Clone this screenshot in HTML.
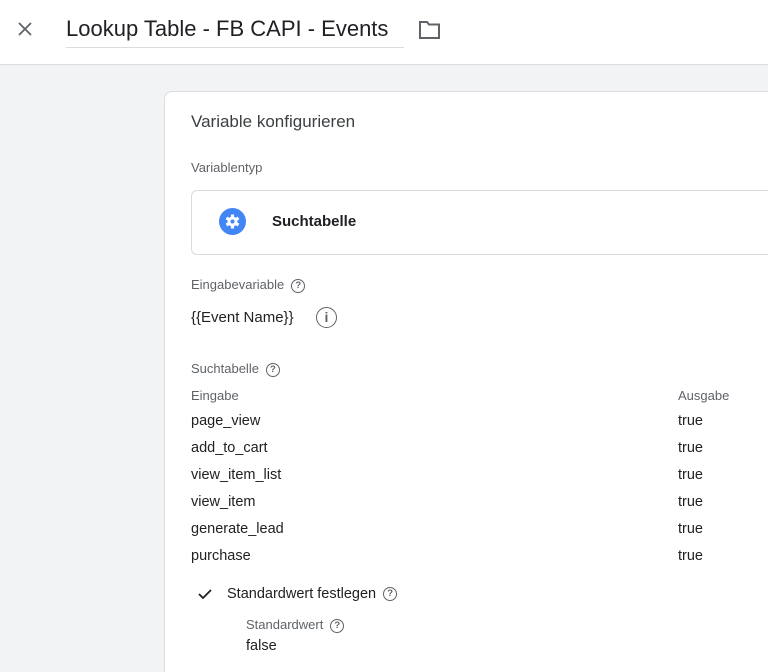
<html><head><style>
html,body{margin:0;width:768px;height:672px;overflow:hidden}
body{background:#f1f3f4;font-family:"Liberation Sans",Arial,sans-serif;position:relative}
.hdr{position:absolute;left:0;top:0;width:768px;height:64px;background:#fff;border-bottom:1px solid #dadce0}
.t{position:absolute;font-size:14.5px;color:#202124;white-space:nowrap}
.s{color:#5f6368;font-size:13px}
.card{position:absolute;left:164px;top:91px;width:603px;height:581px;background:#fff;border:1px solid #dadce0;border-right:none;border-bottom:none;border-radius:8px 0 0 0}
.q{display:inline-block;width:12px;height:12px;border:1.6px solid #5f6368;border-radius:50%;font-size:9.5px;line-height:12px;text-align:center;color:#5f6368;font-weight:bold;vertical-align:middle;margin-left:7px}
</style></head><body>
<div class="hdr">
<svg style="position:absolute;left:17px;top:21px" width="16" height="16"><path d="M2 2L14 14M14 2L2 14" stroke="#5f6368" stroke-width="1.8"/></svg>
<div class="t" style="left:66px;top:16px;font-size:22px;color:#202124">Lookup Table - FB CAPI - Events</div>
<div style="position:absolute;left:66px;top:47px;width:338px;height:1px;background:#dadce0"></div>
<svg style="position:absolute;left:418px;top:19px" width="24" height="22"><path d="M2 3H9L11 5.5H21V19H2Z" fill="none" stroke="#5f6368" stroke-width="2"/></svg>
</div>
<div class="card"></div>
<div class="t" style="left:191px;top:112px;font-size:17px;color:#3c4043">Variable konfigurieren</div>
<div class="t s" style="left:191px;top:160px">Variablentyp</div>
<div style="position:absolute;left:191px;top:190px;width:576px;height:63px;border:1px solid #dadce0;border-right:none;border-radius:6px 0 0 6px;background:#fff"></div>
<svg style="position:absolute;left:219px;top:208px" width="27" height="27" viewBox="0 0 27 27"><circle cx="13.5" cy="13.5" r="13.5" fill="#4285f4"/><g transform="translate(13.5 13.5)" fill="#fff"><circle r="5"/><g><rect x="-1.6" y="-7" width="3.2" height="14"/><rect x="-1.6" y="-7" width="3.2" height="14" transform="rotate(60)"/><rect x="-1.6" y="-7" width="3.2" height="14" transform="rotate(120)"/></g></g><circle cx="13.5" cy="13.5" r="2" fill="#4285f4"/></svg>
<div class="t" style="left:272px;top:213px;font-weight:bold;font-size:15px">Suchtabelle</div>
<div class="t s" style="left:191px;top:277px">Eingabevariable<span class="q">?</span></div>
<div class="t" style="left:191px;top:309px;font-size:15px">{{Event Name}}</div>
<div style="position:absolute;left:316px;top:307px;width:19px;height:19px;border:1.8px solid #5f6368;border-radius:50%;color:#5f6368;font-size:14px;line-height:19px;text-align:center;font-weight:bold">i</div>
<div class="t s" style="left:191px;top:361px">Suchtabelle<span class="q">?</span></div>
<div class="t s" style="left:191px;top:388px">Eingabe</div>
<div class="t s" style="left:678px;top:388px">Ausgabe</div>
<div class="t" style="left:191px;top:413px">page_view</div><div class="t" style="left:678px;top:413px">true</div>
<div class="t" style="left:191px;top:440px">add_to_cart</div><div class="t" style="left:678px;top:440px">true</div>
<div class="t" style="left:191px;top:467px">view_item_list</div><div class="t" style="left:678px;top:467px">true</div>
<div class="t" style="left:191px;top:494px">view_item</div><div class="t" style="left:678px;top:494px">true</div>
<div class="t" style="left:191px;top:521px">generate_lead</div><div class="t" style="left:678px;top:521px">true</div>
<div class="t" style="left:191px;top:548px">purchase</div><div class="t" style="left:678px;top:548px">true</div>
<svg style="position:absolute;left:197px;top:587px" width="16" height="14"><path d="M2 7L6 11L14 3" stroke="#202124" stroke-width="1.8" fill="none"/></svg>
<div class="t" style="left:227px;top:586px">Standardwert festlegen<span class="q">?</span></div>
<div class="t s" style="left:246px;top:617px">Standardwert<span class="q">?</span></div>
<div class="t" style="left:246px;top:638px">false</div>
</body></html>
